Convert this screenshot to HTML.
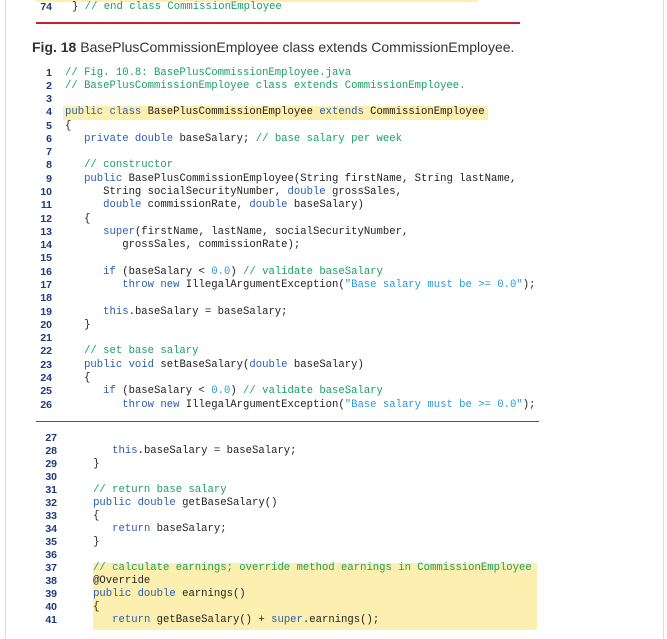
<!DOCTYPE html>
<html><head><meta charset="utf-8"><style>
body{margin:0;width:667px;height:630px;background:#fff;position:relative;overflow:hidden;font-family:"Liberation Sans",sans-serif}
.frame{position:absolute;left:5px;top:-1px;width:657px;height:640px;border-left:1px solid #ddd;border-right:1px solid #ddd}
.hl{position:absolute;background:#fdefb0}
.red{position:absolute;height:2px;background:#c8202e}
pre{margin:0;position:absolute;font-family:"Liberation Mono",monospace;font-size:10.6px;color:#222;white-space:pre}
.n{position:absolute;font-family:"Liberation Sans",sans-serif;font-weight:bold;font-size:10.5px;color:#1d3a7a;text-align:right;width:30px;white-space:pre}
.k{color:#2a5db0}.c{color:#1aa060}.s{color:#2a9ad8}
</style></head><body>
<div class="frame"></div>
<div class="hl" style="left:36px;top:0;width:442px;height:2px"></div>
<div class="n" style="left:22px;top:1px;line-height:13px">74</div>
<pre style="left:72px;top:1px;line-height:13px">} <span class="c">// end class CommissionEmployee</span></pre>
<div class="red" style="left:36px;top:22px;width:484px"></div>
<div style="position:absolute;left:32px;top:39px;font-size:14px;color:#333"><b>Fig. 18</b> BasePlusCommissionEmployee class extends CommissionEmployee.</div>
<div class="hl" style="left:63px;top:106px;width:425px;height:14px"></div>
<div class="n" style="left:22px;top:66.5px;line-height:13.28px">1
2
3
4
5
6
7
8
9
10
11
12
13
14
15
16
17
18
19
20
21
22
23
24
25
26</div>
<pre style="left:65px;top:66.5px;line-height:13.28px"><span class="c">// Fig. 10.8: BasePlusCommissionEmployee.java</span>
<span class="c">// BasePlusCommissionEmployee class extends CommissionEmployee.</span>

<span class="k">public class</span> BasePlusCommissionEmployee <span class="k">extends</span> CommissionEmployee
{
   <span class="k">private double</span> baseSalary; <span class="c">// base salary per week</span>

   <span class="c">// constructor</span>
   <span class="k">public</span> BasePlusCommissionEmployee(String firstName, String lastName,
      String socialSecurityNumber, <span class="k">double</span> grossSales,
      <span class="k">double</span> commissionRate, <span class="k">double</span> baseSalary)
   {
      <span class="k">super</span>(firstName, lastName, socialSecurityNumber,
         grossSales, commissionRate);

      <span class="k">if</span> (baseSalary &lt; <span class="s">0.0</span>) <span class="c">// validate baseSalary</span>
         <span class="k">throw new</span> IllegalArgumentException(<span class="s">"Base salary must be &gt;= 0.0"</span>);

      <span class="k">this</span>.baseSalary = baseSalary;
   }

   <span class="c">// set base salary</span>
   <span class="k">public void</span> setBaseSalary(<span class="k">double</span> baseSalary)
   {
      <span class="k">if</span> (baseSalary &lt; <span class="s">0.0</span>) <span class="c">// validate baseSalary</span>
         <span class="k">throw new</span> IllegalArgumentException(<span class="s">"Base salary must be &gt;= 0.0"</span>);</pre>
<div class="red" style="left:36px;top:421px;width:503px;height:1px"></div>
<div class="hl" style="left:93px;top:563px;width:444px;height:67px"></div>
<div class="n" style="left:27px;top:431.5px;line-height:13.07px">27
28
29
30
31
32
33
34
35
36
37
38
39
40
41</div>
<pre style="left:74px;top:431.5px;line-height:13.07px">

      <span class="k">this</span>.baseSalary = baseSalary;
   }

   <span class="c">// return base salary</span>
   <span class="k">public double</span> getBaseSalary()
   {
      <span class="k">return</span> baseSalary;
   }

   <span class="c">// calculate earnings; override method earnings in CommissionEmployee</span>
   @Override
   <span class="k">public double</span> earnings()
   {
      <span class="k">return</span> getBaseSalary() + <span class="k">super</span>.earnings();</pre>
</body></html>
